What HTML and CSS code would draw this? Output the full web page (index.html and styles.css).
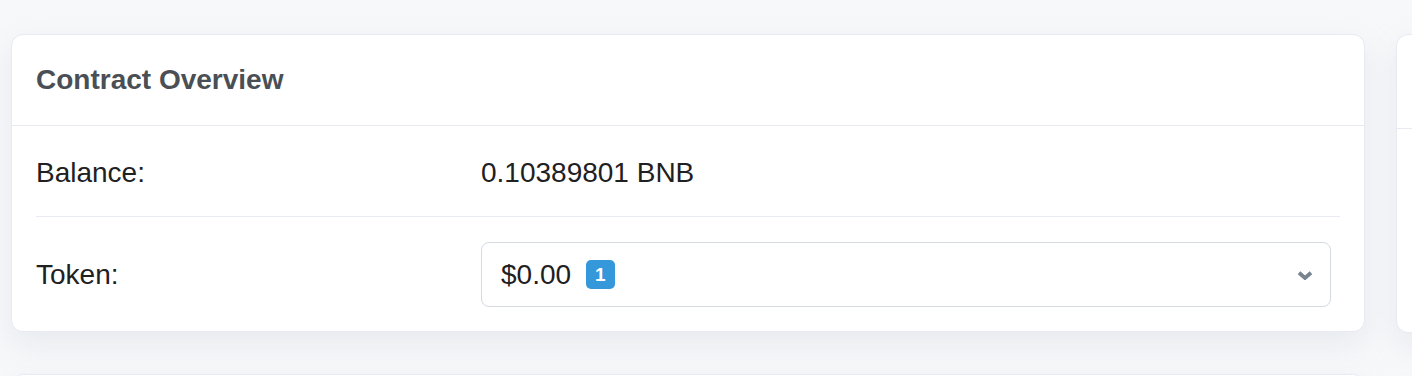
FILE: index.html
```html
<!DOCTYPE html>
<html lang="en">
<head>
<meta charset="utf-8">
<title>Contract Overview</title>
<link rel="stylesheet" href="styles.css">
</head>
<body>
<div class="page">
  <div class="cards">
    <section class="card card-main">
      <header class="card-header">
        <h2 class="card-title">Contract Overview</h2>
      </header>
      <div class="card-body">
        <div class="row row-balance">
          <div class="label">Balance:</div>
          <div class="value">0.10389801 BNB</div>
        </div>
        <div class="row row-token">
          <div class="label">Token:</div>
          <div class="value">
            <div class="select">
              <span class="select-amount">$0.00</span>
              <span class="badge">1</span>
              <svg class="chevron" width="16" height="9" viewBox="0 0 16 9" aria-hidden="true">
                <polyline points="2,1.8 8,7 14,1.8" fill="none" stroke="#77838f" stroke-width="3.8" stroke-linejoin="miter"/>
              </svg>
            </div>
          </div>
        </div>
      </div>
    </section>
    <section class="card card-side">
      <header class="card-header card-header-side"></header>
      <div class="card-body"></div>
    </section>
  </div>
  <section class="card card-bottom"></section>
</div>
</body>
</html>
```

FILE: styles.css
```css
html, body {
  margin: 0;
  padding: 0;
}

body {
  background: #f7f8fa;
  font-family: "Liberation Sans", Arial, Helvetica, sans-serif;
  color: #1e2022;
  overflow: hidden;
}

.page {
  box-sizing: border-box;
  height: 376px;
  width: 1412px;
  overflow: hidden;
  padding: 34px 0 0 11px;
  display: flex;
  flex-direction: column;
  gap: 41px;
}

.cards {
  display: flex;
  gap: 31px;
  align-items: flex-start;
}

.card {
  background: #ffffff;
  border: 1px solid #e7eaf3;
  border-radius: 12px;
  box-shadow: 0 12px 30px rgba(189, 197, 209, 0.28);
  box-sizing: border-box;
  flex-shrink: 0;
}

.card-main {
  width: 1354px;
}

.card-side {
  width: 600px;
  height: 299px;
}

.card-header {
  height: 90px;
  border-bottom: 1px solid #e7eaf3;
  padding: 0 24px;
  display: flex;
  align-items: center;
}

.card-header-side {
  height: 93px;
}

.card-title {
  margin: 0;
  font-size: 28px;
  font-weight: 700;
  color: #4a4f55;
  letter-spacing: 0;
}

.card-body {
  padding: 0 24px;
}

.row {
  display: grid;
  grid-template-columns: 445px 1fr;
  align-items: center;
  font-size: 28px;
  color: #1e2022;
}

.row-balance {
  box-sizing: border-box;
  height: 91px;
  padding-top: 4px;
  border-bottom: 1px solid #e7eaf3;
}

.row-token {
  padding: 25px 0 24px;
}

.select {
  height: 65px;
  box-sizing: border-box;
  border: 1px solid #d5dae2;
  border-radius: 8px;
  margin-right: 9px;
  padding: 0 17px 0 19px;
  display: flex;
  align-items: center;
}

.select-amount {
  color: #1e2022;
}

.badge {
  margin-left: 15px;
  height: 29px;
  line-height: 29px;
  padding: 0 9px;
  background: #3498db;
  color: #ffffff;
  font-size: 19px;
  font-weight: 700;
  border-radius: 5px;
}

.chevron {
  margin-left: auto;
  margin-top: 2px;
}

.card-bottom {
  width: 1354px;
  height: 100px;
}
```
